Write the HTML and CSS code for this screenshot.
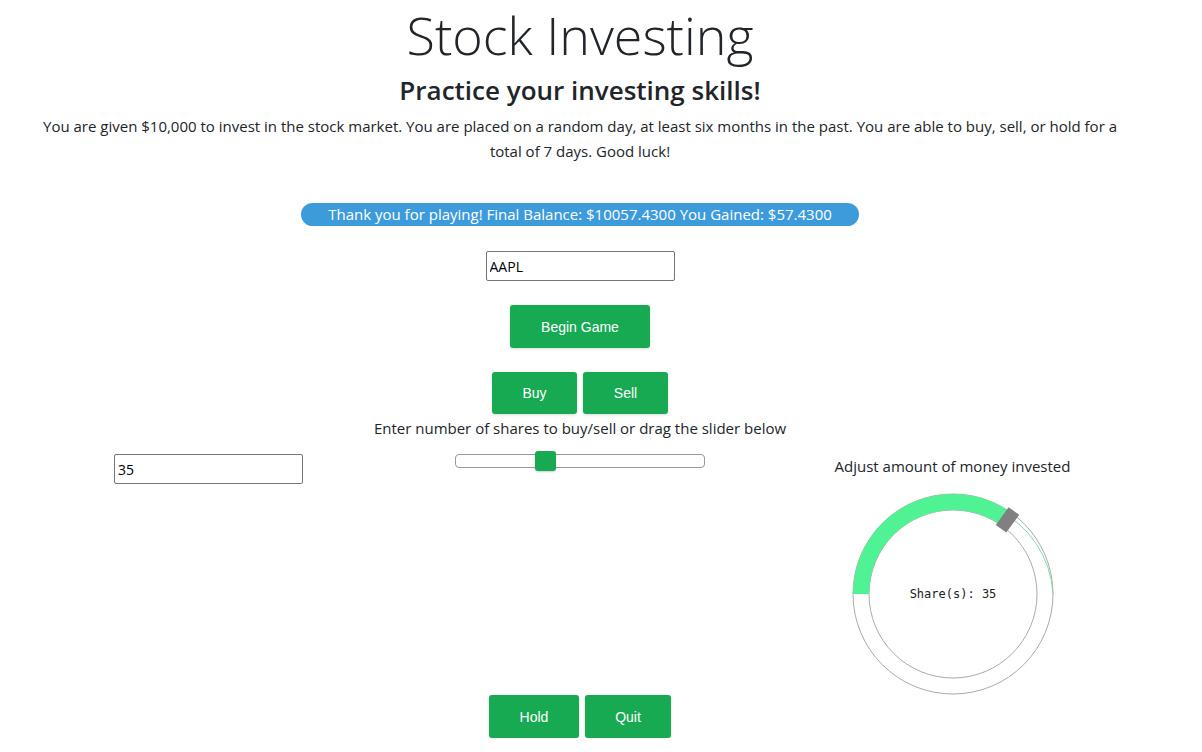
FILE: index.html
```html
<!DOCTYPE html>
<html lang="en">
<head>
  <meta charset="UTF-8" />
  <title>Stock Investing</title>
  <link rel="stylesheet" href="styles.css">
</head>
<body>
  <div class="page">
    <h1 class="title">Stock Investing</h1>
    <h2 class="subtitle">Practice your investing skills!</h2>
    <p class="intro">You are given $10,000 to invest in the stock market. You are placed on a random day, at least six months in the past. You are able to buy, sell, or hold for a total of 7 days. Good luck!</p>

    <div class="status">Thank you for playing! Final Balance: $10057.4300 You Gained: $57.4300</div>

    <input class="ticker" type="text" value="AAPL" />

    <button class="btn btn-begin">Begin Game</button>

    <div class="trade">
      <button class="btn btn-trade">Buy</button>
      <button class="btn btn-trade">Sell</button>
    </div>
    <div class="hint">Enter number of shares to buy/sell or drag the slider below</div>

    <div class="controls">
      <div class="col col-left">
        <input class="shares" type="text" value="35" />
      </div>
      <div class="col col-mid">
        <input class="slider" type="range" min="0" max="100" value="35" />
      </div>
      <div class="col col-right">
        <div class="dial-label">Adjust amount of money invested</div>
        <svg class="dial" width="202" height="202" viewBox="0 0 202 202">
          <circle cx="101" cy="101" r="100" fill="none" stroke="#aaa" stroke-width="1" />
          <circle cx="101" cy="101" r="84" fill="none" stroke="#aaa" stroke-width="1" />
          <!-- 35 of 100 shares, drawn clockwise from 9 o'clock -->
          <circle cx="101" cy="101" r="92" fill="none" stroke="#50f393" stroke-width="16"
                  stroke-dasharray="202.3 600" transform="rotate(180 101 101)" />
          <path d="M144 16 A 100 100 0 0 1 201 101" fill="none" stroke="#7fdcaa" stroke-width="1" />
          <rect x="95" y="-2" width="13" height="22" fill="#808080" transform="rotate(36 101 101)" />
          <text x="101" y="105" text-anchor="middle" class="dial-text">Share(s): 35</text>
        </svg>
      </div>
    </div>

    <div class="trade trade-bottom">
      <button class="btn btn-hold">Hold</button>
      <button class="btn btn-quit">Quit</button>
    </div>
  </div>
</body>
</html>
```

FILE: styles.css
```css
body {
  margin: 0;
  font-family: "Open Sans", "Noto Sans", sans-serif;
  color: #212529;
  background: #fff;
}
.page {
  width: 1160px;
  display: flex;
  flex-direction: column;
  align-items: center;
  text-align: center;
}
.title {
  margin: 3px 0 0;
  font-size: 52px;
  font-weight: 300;
  line-height: 64px;
}
.subtitle {
  margin: 7px 0 0;
  font-size: 26px;
  font-weight: 600;
  line-height: 32px;
}
.intro {
  margin: 8px 0 0;
  padding: 0 30px;
  font-size: 15px;
  line-height: 25px;
}
.status {
  margin-top: 39px;
  width: 558px;
  height: 23px;
  line-height: 23px;
  border-radius: 12px;
  background: #3d9bdc;
  color: #fff;
  font-size: 15px;
}
.ticker,
.shares {
  box-sizing: border-box;
  width: 189px;
  height: 30px;
  padding: 1px 3px;
  border: 1px solid #767676;
  border-radius: 2px;
  font-family: "Open Sans", sans-serif;
  font-size: 14px;
  color: #000;
}
.ticker {
  margin-top: 25px;
}
.btn {
  height: 43px;
  border: none;
  border-radius: 3px;
  background: #17aa53;
  color: #fff;
  font-family: "Liberation Sans", Arial, sans-serif;
  font-size: 14px;
  box-shadow: 0 1px 3px rgba(0, 0, 0, 0.15);
}
.btn-begin {
  width: 140px;
  margin-top: 24px;
}
.trade {
  display: flex;
  gap: 6px;
  margin-top: 24px;
}
.btn-trade {
  width: 85px;
  height: 42px;
}
.hint {
  margin-top: 4px;
  font-size: 15px;
  line-height: 20px;
}
.controls {
  display: grid;
  grid-template-columns: 387px 386px 387px;
  width: 1160px;
  margin-top: 16px;
}
.col-left {
  text-align: left;
  padding-left: 114px;
}
.col-mid {
  display: flex;
  justify-content: center;
}
.col-right {
  display: flex;
  flex-direction: column;
  align-items: center;
  padding-right: 28px;
}
.slider {
  -webkit-appearance: none;
  appearance: none;
  width: 250px;
  height: 14px;
  margin: 0;
  border: 1px solid #999;
  border-radius: 4px;
  background: #fff;
  box-sizing: border-box;
}
.slider::-webkit-slider-thumb {
  -webkit-appearance: none;
  width: 21px;
  height: 20px;
  border-radius: 3px;
  background: #17aa53;
  box-shadow: 0 1px 2px rgba(0, 0, 0, 0.2);
  cursor: pointer;
}
.dial-label {
  margin-top: 2px;
  font-size: 15px;
  line-height: 20px;
}
.dial {
  margin-top: 17px;
  display: block;
}
.dial-text {
  font-family: "DejaVu Sans Mono", monospace;
  font-size: 12px;
  fill: #222;
}
.trade-bottom {
  margin-top: 0;
}
.btn-hold {
  width: 90px;
}
.btn-quit {
  width: 86px;
}
```
